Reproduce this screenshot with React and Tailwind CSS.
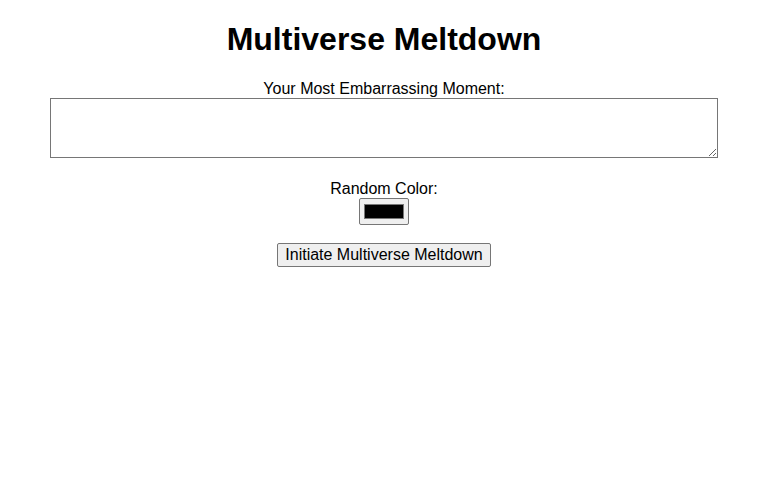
import { useState } from 'react';

export default function App() {
  const [moment, setMoment] = useState('');
  const [color, setColor] = useState('#000000');

  return (
    <div className="min-h-[480px] bg-white text-black font-['Liberation_Sans',Arial,sans-serif] flex flex-col items-center">
      <h1 className="mt-[21px] text-[32px] leading-[37px] font-bold">Multiverse Meltdown</h1>

      <label htmlFor="moment" className="mt-[22px] text-base leading-[18px]">
        Your Most Embarrassing Moment:
      </label>
      <textarea
        id="moment"
        value={moment}
        onChange={(e) => setMoment(e.target.value)}
        className="w-[668px] h-[60px] border border-[#767676] bg-white p-[2px] text-sm"
      />

      <label htmlFor="color" className="mt-[22px] text-base leading-[18px]">
        Random Color:
      </label>
      {/* native picker sits invisible on top of a drawn swatch */}
      <div className="relative w-[50px] h-[27px] border border-[#767676] rounded-[2px] bg-[#efefef] flex items-center justify-center">
        <input
          id="color"
          type="color"
          value={color}
          onChange={(e) => setColor(e.target.value)}
          className="absolute inset-0 opacity-0 w-full h-full cursor-pointer"
        />
        <span className="w-[40px] h-[15px] border border-[#777]" style={{ backgroundColor: color }} />
      </div>

      <button
        type="button"
        className="mt-[18px] h-[24px] px-[7px] border border-[#767676] rounded-[2px] bg-[#efefef] text-base leading-[18px] hover:bg-[#e5e5e5]"
      >
        Initiate Multiverse Meltdown
      </button>
    </div>
  );
}
